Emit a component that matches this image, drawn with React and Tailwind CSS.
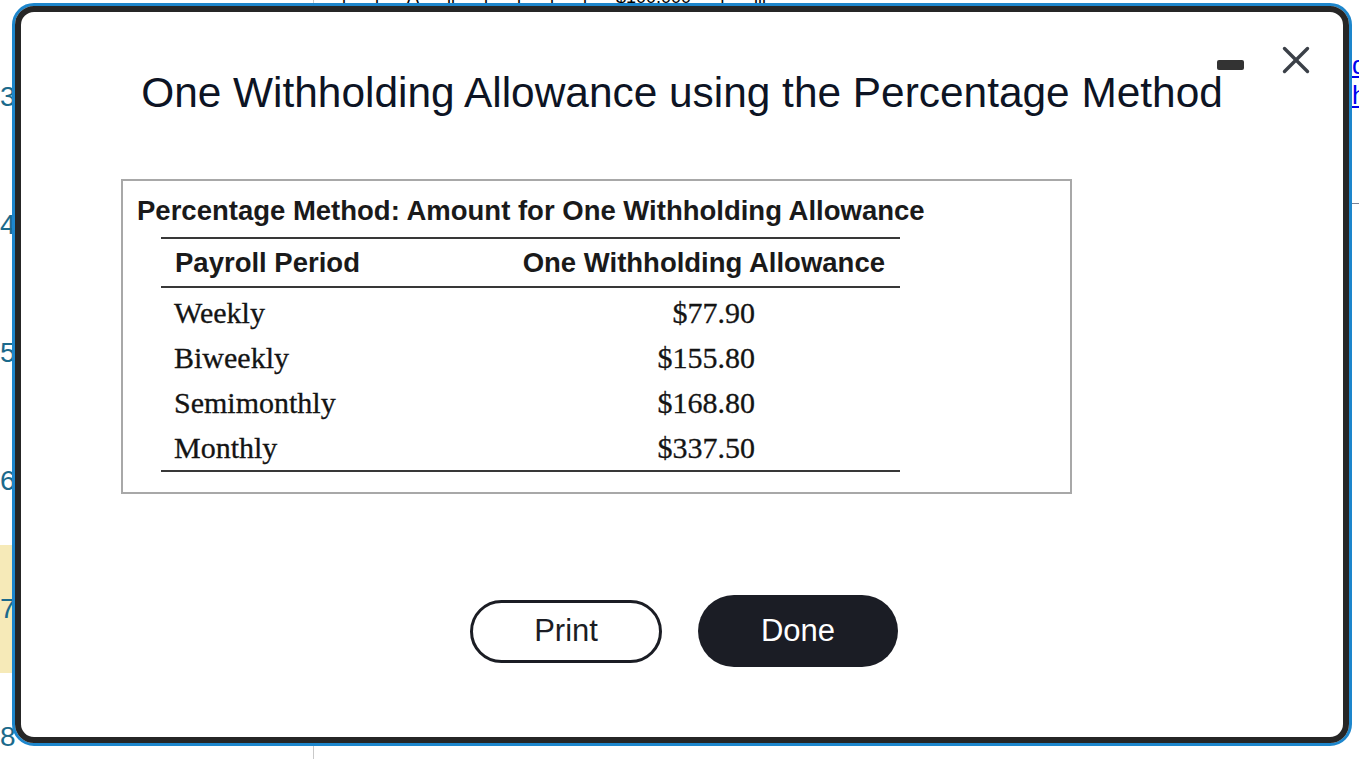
import React from 'react'

const rows = [
  { period: 'Weekly', amount: '$77.90' },
  { period: 'Biweekly', amount: '$155.80' },
  { period: 'Semimonthly', amount: '$168.80' },
  { period: 'Monthly', amount: '$337.50' },
]

const lines = [3, 4, 5, 6, 7, 8]

export default function App() {
  return (
    <div className="relative w-[1359px] h-[759px] overflow-hidden bg-white [font-family:'Liberation_Sans',Arial,sans-serif]">
      {/* page behind the modal */}
      <div className="flex h-full">
        <div className="w-[314px] border-r border-[#c9c9c9] pt-[33px]">
          {lines.map(n => (
            <div
              key={n}
              className={n === 7
                ? 'h-[128px] flex items-center text-[28px] text-[#1b6a8c] bg-[#f6eab8]'
                : 'h-[128px] flex items-center text-[28px] text-[#1b6a8c]'}
            >
              {n}
            </div>
          ))}
        </div>
        <div className="flex-1 flex flex-col">
          <div className="h-[3px] flex items-end overflow-hidden">
            <p className="-mb-[4px] pl-[28px] text-[18px] leading-[20px] whitespace-nowrap text-black [word-spacing:24px]">
              l i A ll l l l l $100,000 f lli
            </p>
          </div>
          <div className="flex justify-end">
            <div className="w-[7px] overflow-hidden pt-[47px]">
              <p className="text-[26px] leading-[30px] text-[#0000ee] underline">dd</p>
              <p className="text-[26px] leading-[30px] text-[#0000ee] underline">hh</p>
              <div className="mt-[93px] h-px bg-[#7b8396]"></div>
            </div>
          </div>
        </div>
      </div>

      {/* modal */}
      <div className="absolute left-[12px] top-[3px] w-[1340px] h-[743px] rounded-[22px] border-[3px] border-[#1d86cc]">
        <div className="relative h-full rounded-[19px] border-[6px] border-[#262626] bg-white">
          <div className="absolute right-[99px] top-[48px] w-[27px] h-[10px] rounded-[2px] bg-[#333333]"></div>
          <button className="absolute right-[33px] top-[34px] w-[28px] h-[28px]" aria-label="Close">
            <svg width="28" height="28" viewBox="0 0 28 28" fill="none" stroke="#3b4048" strokeWidth="3.4" strokeLinecap="round">
              <path d="M2.5 2.5 L25.5 25.5" />
              <path d="M25.5 2.5 L2.5 25.5" />
            </svg>
          </button>

          <h1 className="pt-[57px] text-center text-[42.4px] leading-[48px] text-[#0d1424]">
            One Withholding Allowance using the Percentage Method
          </h1>

          <div className="ml-[100px] mt-[62px] w-[951px] h-[315px] border-2 border-[#a8a8a8] pt-[14px] pl-[14px] text-[#1a1a1a]">
            <p className="text-[27.5px] leading-[32px] font-bold">
              Percentage Method: Amount for One Withholding Allowance
            </p>
            <div className="ml-[24px] mt-[10px] w-[739px] border-b-2 border-[#383838]">
              <div className="h-[51px] border-y-2 border-[#383838] flex items-center justify-between pl-[14px] pr-[15px] text-[27.5px] font-bold">
                <span>Payroll Period</span>
                <span>One Withholding Allowance</span>
              </div>
              <div className="pt-[2px]">
                {rows.map(r => (
                  <div key={r.period} className="w-[594px] h-[45px] pl-[13px] flex items-center justify-between text-[30px] text-[#141414] [-webkit-text-stroke:0.3px_#141414] [font-family:'Liberation_Serif','Times_New_Roman',serif]">
                    <span>{r.period}</span>
                    <span>{r.amount}</span>
                  </div>
                ))}
              </div>
            </div>
          </div>

          <div className="mt-[101px] h-[72px] pl-[4px] flex items-center justify-center gap-[36px]">
            <button className="w-[192px] h-[63px] rounded-full border-[3px] border-[#1b1d24] text-[31px] text-[#1b1d24]">
              Print
            </button>
            <button className="w-[200px] h-[72px] rounded-full bg-[#1b1d25] text-[31px] text-white">
              Done
            </button>
          </div>
        </div>
      </div>
    </div>
  )
}
